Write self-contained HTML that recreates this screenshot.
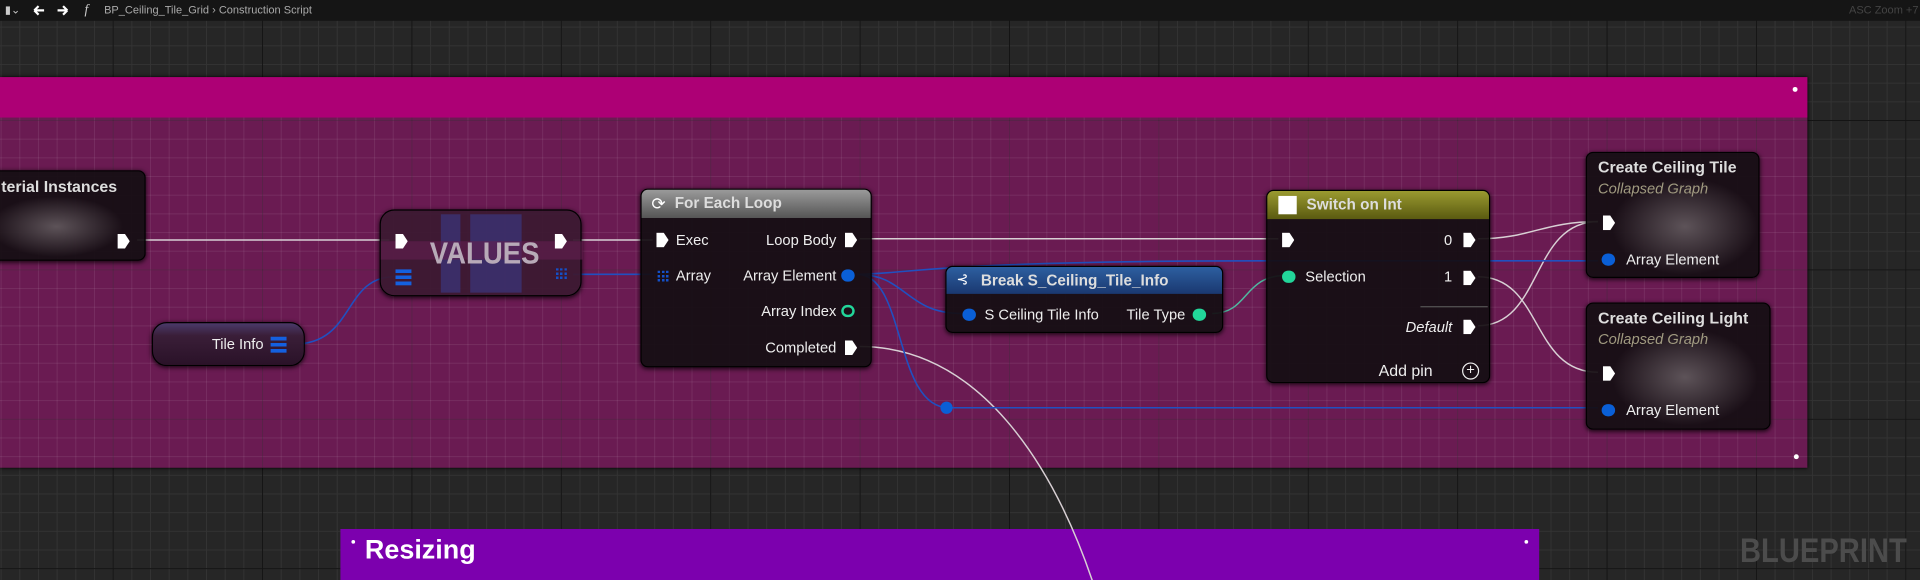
<!DOCTYPE html>
<html><head><meta charset="utf-8"><style>
*{box-sizing:border-box;margin:0;padding:0}
body{width:1920px;height:580px;overflow:hidden;background:#262626;font-family:"Liberation Sans",sans-serif}
#w{position:absolute;left:0;top:0;width:1568px;height:474px;transform:scale(1.22449);transform-origin:0 0;overflow:hidden;
background-color:#262626;
background-image:linear-gradient(#141414 1px,transparent 1px),linear-gradient(90deg,#141414 1px,transparent 1px),linear-gradient(#333 1px,transparent 1px),linear-gradient(90deg,#333 1px,transparent 1px);
background-size:122px 122px,122px 122px,15.25px 15.25px,15.25px 15.25px;background-position:-30px -24px}
.a{position:absolute}
.top{left:0;top:0;width:1568px;height:17px;background:#151515;color:#aaa;font-size:9px;line-height:17px}
.cb{left:0;top:63px;width:1476px;height:319px;background-color:#6a1b52;
background-image:linear-gradient(rgba(0,0,0,.25) 1px,transparent 1px),linear-gradient(90deg,rgba(0,0,0,.25) 1px,transparent 1px),linear-gradient(rgba(255,255,255,.08) 1px,transparent 1px),linear-gradient(90deg,rgba(255,255,255,.08) 1px,transparent 1px);
background-size:122px 122px,122px 122px,15.25px 15.25px,15.25px 15.25px;background-position:-30px -87px;box-shadow:0 0 3px #000}
.ch{left:0;top:63px;width:1476px;height:33px;background:#ad0075}
.dot{width:4px;height:4px;border-radius:2px;background:#fff}
.n{position:absolute;background:rgba(20,14,18,.93);border-radius:6px;box-shadow:0 1px 4px rgba(0,0,0,.8);color:#eee;font-size:12px;border:1px solid #000}
.h{position:absolute;left:0;top:0;right:0;height:23px;border-radius:5px 5px 0 0;font-weight:bold;font-size:12.5px;line-height:22px;padding-left:28px;color:#ddd}
.t{position:absolute;white-space:nowrap}
.ex{position:absolute;width:10px;height:12px;background:#fff;clip-path:polygon(0 0,60% 0,100% 50%,60% 100%,0 100%)}
.pb{position:absolute;width:11px;height:10px;border-radius:5px;background:#0a5fd6}
.pg{position:absolute;width:11px;height:10px;border-radius:5px;background:#22d69a}
.blur{position:absolute;background:radial-gradient(ellipse at center,rgba(110,100,105,.8),rgba(40,30,36,0) 70%)}
.grid{position:absolute;width:9px;height:9px;background:
linear-gradient(90deg,#1450c8 2px,transparent 2px 3.5px,#1450c8 3.5px 5.5px,transparent 5.5px 7px,#1450c8 7px);
-webkit-mask:linear-gradient(#000 2px,transparent 2px 3.5px,#000 3.5px 5.5px,transparent 5.5px 7px,#000 7px)}
.lst{position:absolute;width:13px;height:13px;background:linear-gradient(#1460e0 3px,transparent 3px 5px,#1460e0 5px 8px,transparent 8px 10px,#1460e0 10px)}
</style></head><body><div id="w">
<div class="a top"><span style="position:absolute;left:4px;color:#ccc">▮⌄</span>
<svg class="a" style="left:27px;top:4px" width="30" height="9"><path d="M1 4.5H9M1 4.5L4.5 1M1 4.5L4.5 8" stroke="#fff" stroke-width="1.8" fill="none"/><path d="M28 4.5H20M28 4.5L24.5 1M28 4.5L24.5 8" stroke="#fff" stroke-width="1.8" fill="none"/></svg>
<span style="position:absolute;left:69px;font-style:italic;font-family:'Liberation Serif',serif;font-size:11px;color:#ccc">f</span><span style="position:absolute;left:85px">BP_Ceiling_Tile_Grid › Construction Script</span><span style="position:absolute;left:1510px;color:#444">ASC Zoom +7</span></div>
<div class="a cb"></div><div class="a ch"></div>
<div class="a dot" style="left:1464px;top:71px"></div><div class="a dot" style="left:1465px;top:371px"></div>
<div class="a" style="left:278px;top:432px;width:979px;height:42px;background:#7c00ae"></div>
<div class="a dot" style="left:1245px;top:441px;width:3px;height:3px"></div><div class="a dot" style="left:287px;top:441px;width:3px;height:3px"></div>
<div class="t" style="left:298px;top:436px;color:#fff;font-weight:bold;font-size:22px">Resizing</div>
<div class="t" style="left:1421px;top:434px;color:#4c4c4c;font-weight:bold;font-size:28px;transform:scaleX(.85);transform-origin:0 0;letter-spacing:0">BLUEPRINT</div>

<svg class="a" style="left:0;top:0" width="1568" height="474" fill="none">
<g stroke="#d8d0d4" stroke-width="1.2">
<path d="M112 196H318"/><path d="M468 196H533"/><path d="M702 195H1044"/>
<path d="M1207 195C1250 195 1260 181 1305 181"/>
<path d="M1207 226C1260 226 1250 304 1305 304"/>
<path d="M1207 266C1260 266 1250 181 1305 181"/>
<path d="M702 283C800 283 860 380 892 474"/>
</g>
<g stroke="#2050c0" stroke-width="1.3">
<path d="M240 281C290 281 280 226 322 226"/><path d="M468 224H533"/>
<path d="M700 224C740 224 740 256 785 256"/>
<path d="M700 224C740 224 760 213 1034 213H1305"/>
<path d="M700 224C740 224 730 333 775 333H1305"/>
</g>
<path d="M990 256C1020 256 1015 225 1050 225" stroke="#50b8a0" stroke-width="1.2"/>
<circle cx="773" cy="333" r="5" fill="#0a5fd6"/>
</svg>

<div class="n" style="left:-10px;top:139px;width:129px;height:74px"><div class="blur" style="left:0;top:20px;width:110px;height:50px"></div><div class="t" style="left:10px;top:5px;font-weight:bold;font-size:13px;color:#ddd">terial Instances</div><div class="ex" style="left:105px;top:51px"></div></div>
<div class="n" style="left:310px;top:171px;width:165px;height:71px;border-radius:12px;background:rgba(60,25,50,.95)">
<div class="a" style="left:49px;top:3px;width:16px;height:64px;background:#3a3a8a;opacity:.6"></div><div class="a" style="left:73px;top:3px;width:42px;height:64px;background:#3a3a8a;opacity:.6"></div>
<div class="a" style="left:0;top:25px;width:165px;height:15px;background:rgba(100,30,80,.6)"></div>
<div class="t" style="left:40px;top:21px;font-size:25px;font-weight:bold;color:#b8aab8;transform:scaleX(.9);transform-origin:0 0">VALUES</div>
<div class="ex" style="left:12px;top:19px"></div><div class="ex" style="left:142px;top:19px"></div>
<div class="lst" style="left:12px;top:48px"></div><div class="grid" style="left:143px;top:47px"></div></div>
<div class="n" style="left:124px;top:263px;width:125px;height:36px;border-radius:12px;background:linear-gradient(#4a3a6a 0,#3a1e38 30%,#2a1228)"><div class="t" style="left:48px;top:10px">Tile Info</div><div class="lst" style="left:96px;top:11px"></div></div>
<div class="n" style="left:523px;top:154px;width:189px;height:146px"><div class="h" style="background:linear-gradient(#9a9a9a,#555);padding-left:27px">For Each Loop</div><div class="t" style="left:8px;top:3px;color:#fff;font-size:14px">⟳</div>
<div class="ex" style="left:12px;top:35px"></div><div class="t" style="left:28px;top:34px">Exec</div>
<div class="t" style="right:28px;top:34px">Loop Body</div><div class="ex" style="left:166px;top:35px"></div>
<div class="grid" style="left:13px;top:66px"></div><div class="t" style="left:28px;top:63px">Array</div>
<div class="t" style="right:28px;top:63px">Array Element</div><div class="pb" style="left:163px;top:65px"></div>
<div class="t" style="right:28px;top:92px">Array Index</div><div class="pg" style="left:163px;top:94px;background:none;border:2px solid #22d69a"></div>
<div class="t" style="right:28px;top:122px">Completed</div><div class="ex" style="left:166px;top:123px"></div></div>
<div class="n" style="left:772px;top:217px;width:227px;height:55px"><div class="h" style="background:linear-gradient(#2d5fa0,#1a3870);height:22px">Break S_Ceiling_Tile_Info</div><div class="t" style="left:8px;top:3px;color:#fff;font-size:12px">⊰</div>
<div class="pb" style="left:13px;top:34px"></div><div class="t" style="left:31px;top:32px">S Ceiling Tile Info</div>
<div class="t" style="right:30px;top:32px">Tile Type</div><div class="pg" style="left:201px;top:34px"></div></div>
<div class="n" style="left:1034px;top:155px;width:183px;height:158px"><div class="h" style="background:linear-gradient(#9a9a30,#5a5a10);padding-left:32px">Switch on Int</div><div class="a" style="left:9px;top:4px;width:15px;height:15px;background:#fff"></div>
<div class="ex" style="left:12px;top:34px"></div><div class="t" style="right:30px;top:33px">0</div><div class="ex" style="left:160px;top:34px"></div>
<div class="pg" style="left:12px;top:65px"></div><div class="t" style="left:31px;top:63px">Selection</div><div class="t" style="right:30px;top:63px">1</div><div class="ex" style="left:160px;top:65px"></div>
<div class="a" style="left:125px;top:94px;width:55px;height:1px;background:#555"></div>
<div class="t" style="right:30px;top:104px;font-style:italic">Default</div><div class="ex" style="left:160px;top:105px"></div>
<div class="t" style="right:46px;top:139px;font-size:13px">Add pin</div><div class="a" style="left:159px;top:140px;width:14px;height:14px;border:1.5px solid #eee;border-radius:7px;color:#eee;font-size:12px;line-height:10px;text-align:center">+</div></div>
<div class="n" style="left:1295px;top:124px;width:142px;height:103px"><div class="blur" style="left:20px;top:20px;width:120px;height:80px"></div><div class="t" style="left:9px;top:4px;font-weight:bold;font-size:13px;color:#ddd">Create Ceiling Tile</div><div class="t" style="left:9px;top:22px;font-style:italic;color:#a09a80">Collapsed Graph</div><div class="ex" style="left:13px;top:51px"></div><div class="pb" style="left:12px;top:82px"></div><div class="t" style="left:32px;top:80px">Array Element</div></div>
<div class="n" style="left:1295px;top:247px;width:151px;height:104px"><div class="blur" style="left:20px;top:20px;width:120px;height:80px"></div><div class="t" style="left:9px;top:4px;font-weight:bold;font-size:13px;color:#ddd">Create Ceiling Light</div><div class="t" style="left:9px;top:22px;font-style:italic;color:#a09a80">Collapsed Graph</div><div class="ex" style="left:13px;top:51px"></div><div class="pb" style="left:12px;top:82px"></div><div class="t" style="left:32px;top:80px">Array Element</div></div>
</div></body></html>
